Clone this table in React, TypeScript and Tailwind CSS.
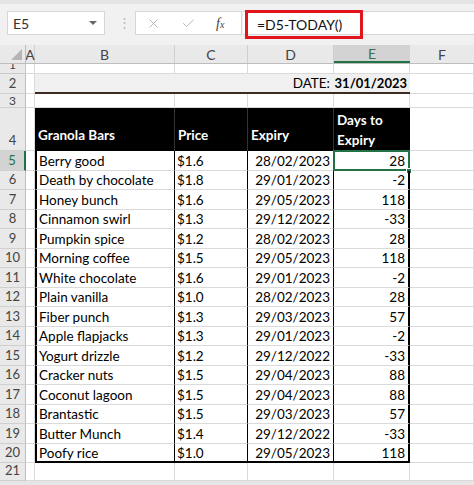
import { X, Check } from 'lucide-react';

const rows = [
  { name: 'Berry good', price: '$1.6', expiry: '28/02/2023', days: '28' },
  { name: 'Death by chocolate', price: '$1.8', expiry: '29/01/2023', days: '-2' },
  { name: 'Honey bunch', price: '$1.6', expiry: '29/05/2023', days: '118' },
  { name: 'Cinnamon swirl', price: '$1.3', expiry: '29/12/2022', days: '-33' },
  { name: 'Pumpkin spice', price: '$1.2', expiry: '28/02/2023', days: '28' },
  { name: 'Morning coffee', price: '$1.5', expiry: '29/05/2023', days: '118' },
  { name: 'White chocolate', price: '$1.6', expiry: '29/01/2023', days: '-2' },
  { name: 'Plain vanilla', price: '$1.0', expiry: '28/02/2023', days: '28' },
  { name: 'Fiber punch', price: '$1.3', expiry: '29/03/2023', days: '57' },
  { name: 'Apple flapjacks', price: '$1.3', expiry: '29/01/2023', days: '-2' },
  { name: 'Yogurt drizzle', price: '$1.2', expiry: '29/12/2022', days: '-33' },
  { name: 'Cracker nuts', price: '$1.5', expiry: '29/04/2023', days: '88' },
  { name: 'Coconut lagoon', price: '$1.5', expiry: '29/04/2023', days: '88' },
  { name: 'Brantastic', price: '$1.5', expiry: '29/03/2023', days: '57' },
  { name: 'Butter Munch', price: '$1.4', expiry: '29/12/2022', days: '-33' },
  { name: 'Poofy rice', price: '$1.0', expiry: '29/05/2023', days: '118' },
];

const grid = 'border-r border-b border-[#dadada]';

function RowHead({ n, active, small }: { n: number | string; active?: boolean; small?: boolean }) {
  return (
    <div
      className={`w-[26px] shrink-0 flex items-end justify-center overflow-hidden border-b border-[#d0d0d0] ${
        small ? 'text-[12px] leading-[13px]' : 'text-[13px] leading-[15px]'
      } ${
        active
          ? 'bg-[#d3d3d3] text-[#217346] border-r-2 border-r-[#217346]'
          : 'bg-[#e9e9e9] text-[#444] border-r border-r-[#bdbdbd]'
      }`}
    >
      <span className={small ? '' : 'pb-[2px]'}>{n}</span>
    </div>
  );
}

export default function App() {
  return (
    <div
      className="w-[474px] h-[485px] overflow-hidden bg-white text-black"
      style={{ fontFamily: 'Lato, "Liberation Sans", sans-serif' }}
    >
      {/* formula bar */}
      <div className="h-[45px] bg-[#f1f1f1] border-t-[4px] border-[#e4e4e4] relative">
        <div className="absolute left-[7px] top-[7px] w-[98px] h-[24px] bg-white border border-[#d6d6d6] flex items-center pl-[5px] text-[14px] text-[#333]">
          E5
          <span className="absolute right-[7px] top-[9px] w-0 h-0 border-l-[4px] border-r-[4px] border-t-[4px] border-l-transparent border-r-transparent border-t-[#666]" />
        </div>
        <div className="absolute left-[118px] top-[12px] text-[#b8b8b8] text-[13px] leading-none">⋮</div>
        <div className="absolute left-[135px] top-[7px] w-[107px] h-[24px] bg-white border border-[#d6d6d6] flex items-center">
          <X size={15} strokeWidth={1.3} className="ml-[10px] text-[#a8a8a8]" />
          <Check size={15} strokeWidth={1.3} className="ml-[20px] text-[#a8a8a8]" />
          <span
            className="ml-[20px] italic text-[14px] text-[#444]"
            style={{ fontFamily: '"Liberation Serif", serif' }}
          >
            f<span className="text-[10px]">x</span>
          </span>
        </div>
        <div className="absolute left-[243px] top-[7px] right-0 h-[24px] bg-white border-y border-[#d6d6d6]" />
        <div className="absolute left-[245px] top-[6px] w-[118px] h-[29px] border-[3px] border-[#e1161c] flex items-center pl-[9px] text-[14px] text-[#111]">
          =D5-TODAY()
        </div>
      </div>

      {/* column headers */}
      <div className="flex h-[19px] bg-[#e9e9e9] border-b border-[#bdbdbd] text-[14px] text-[#444]">
        <div className="w-[26px] shrink-0 border-r border-[#bdbdbd] relative">
          <span
            className="absolute right-[3px] bottom-[3px] w-0 h-0"
            style={{ borderBottom: '11px solid #b5b5b5', borderLeft: '11px solid transparent' }}
          />
        </div>
        <div className="w-[9px] shrink-0 border-r border-[#cfcfcf] flex items-center justify-center">A</div>
        <div className="w-[140px] shrink-0 border-r border-[#cfcfcf] flex items-center justify-center">B</div>
        <div className="w-[73px] shrink-0 border-r border-[#cfcfcf] flex items-center justify-center">C</div>
        <div className="w-[86px] shrink-0 border-r border-[#cfcfcf] flex items-center justify-center">D</div>
        <div className="w-[76px] shrink-0 bg-[#d3d3d3] border-b-2 border-[#217346] text-[#3b6e50] flex items-center justify-center">E</div>
        <div className="flex-1 flex items-center justify-center">F</div>
      </div>

      {/* row 1 (partly hidden) */}
      <div className="flex h-[10px]">
        <div className="w-[26px] shrink-0 bg-[#e9e9e9] border-r border-b border-[#c8c8c8] flex justify-center overflow-hidden text-[12px] leading-none text-[#444]">
          <span className="-mt-[5px]">1</span>
        </div>
        <div className={`w-[9px] ${grid}`} />
        <div className={`w-[140px] ${grid}`} />
        <div className={`w-[73px] ${grid}`} />
        <div className={`w-[86px] ${grid}`} />
        <div className={`w-[76px] ${grid}`} />
        <div className={`flex-1 ${grid}`} />
      </div>

      {/* row 2: date */}
      <div className="flex h-[20px] text-[13.5px]">
        <RowHead n={2} />
        <div className={`w-[9px] ${grid}`} />
        <div className="w-[375px] bg-[#f0f0f0] border-b-2 border-[#3b2a22] flex">
          <div className="w-[140px]" />
          <div className="w-[73px]" />
          <div className="w-[86px] flex items-end justify-end pr-[4px] leading-[18px]">DATE:</div>
          <div className="w-[76px] flex items-end justify-end pr-[3px] font-bold text-[13px] leading-[18px]">31/01/2023</div>
        </div>
        <div className={`flex-1 ${grid}`} />
      </div>

      {/* row 3 */}
      <div className="flex h-[14px]">
        <RowHead n={3} small />
        <div className={`w-[9px] ${grid}`} />
        <div className={`w-[140px] ${grid}`} />
        <div className={`w-[73px] ${grid}`} />
        <div className={`w-[86px] ${grid}`} />
        <div className={`w-[76px] ${grid}`} />
        <div className={`flex-1 ${grid}`} />
      </div>

      {/* row 4: table header */}
      <div className="flex h-[43px] text-[13.5px]">
        <RowHead n={4} />
        <div className={`w-[9px] ${grid}`} />
        <div className="w-[375px] bg-black text-white font-bold flex">
          <div className="w-[140px] border-r border-[#333] flex items-end pl-[3px] pb-[6px]">Granola Bars</div>
          <div className="w-[73px] border-r border-[#333] flex items-end pl-[3px] pb-[6px]">Price</div>
          <div className="w-[86px] border-r border-[#333] flex items-end pl-[3px] pb-[6px]">Expiry</div>
          <div className="w-[76px] flex items-end pl-[3px] pb-[1px] leading-[20px]">
            Days to
            <br />
            Expiry
          </div>
        </div>
        <div className={`flex-1 ${grid}`} />
      </div>

      {/* data rows */}
      {rows.map((r, i) => {
        const last = i === rows.length - 1;
        const bottom = last ? 'border-b-2 border-b-black' : 'border-b border-b-[#dadada]';
        return (
          <div key={i} className="flex h-[19.5px] text-[13.5px] leading-none">
            <RowHead n={i + 5} active={i === 0} />
            <div className={`w-[9px] ${grid}`} />
            <div className={`w-[140px] border-l-2 border-l-black border-r border-r-black ${bottom} flex items-center pl-[2px] pt-[2px]`}>
              {r.name}
            </div>
            <div className={`w-[73px] border-r border-r-black ${bottom} flex items-center pl-[2px] pt-[2px]`}>{r.price}</div>
            <div className={`w-[86px] border-r border-r-black ${bottom} flex items-center justify-end pr-[3px] pt-[2px]`}>
              {r.expiry}
            </div>
            <div className={`w-[76px] border-r-2 border-r-black ${bottom} flex items-center justify-end pr-[3px] pt-[2px] relative`}>
              {r.days}
              {i === 0 && (
                <>
                  <span className="absolute -left-px -top-px -right-[2px] -bottom-px border-2 border-[#217346]" />
                  <span className="absolute -right-[4px] -bottom-[4px] w-[6px] h-[6px] bg-[#217346] border border-white" />
                </>
              )}
            </div>
            <div className={`flex-1 ${grid}`} />
          </div>
        );
      })}

      {/* row 21 */}
      <div className="flex h-[18px]">
        <RowHead n={21} />
        <div className={`w-[9px] ${grid}`} />
        <div className={`w-[140px] ${grid}`} />
        <div className={`w-[73px] ${grid}`} />
        <div className={`w-[86px] ${grid}`} />
        <div className={`w-[76px] ${grid}`} />
        <div className={`flex-1 ${grid}`} />
      </div>
      <div className="h-[10px] bg-[#e6e6e6]" />
    </div>
  );
}
